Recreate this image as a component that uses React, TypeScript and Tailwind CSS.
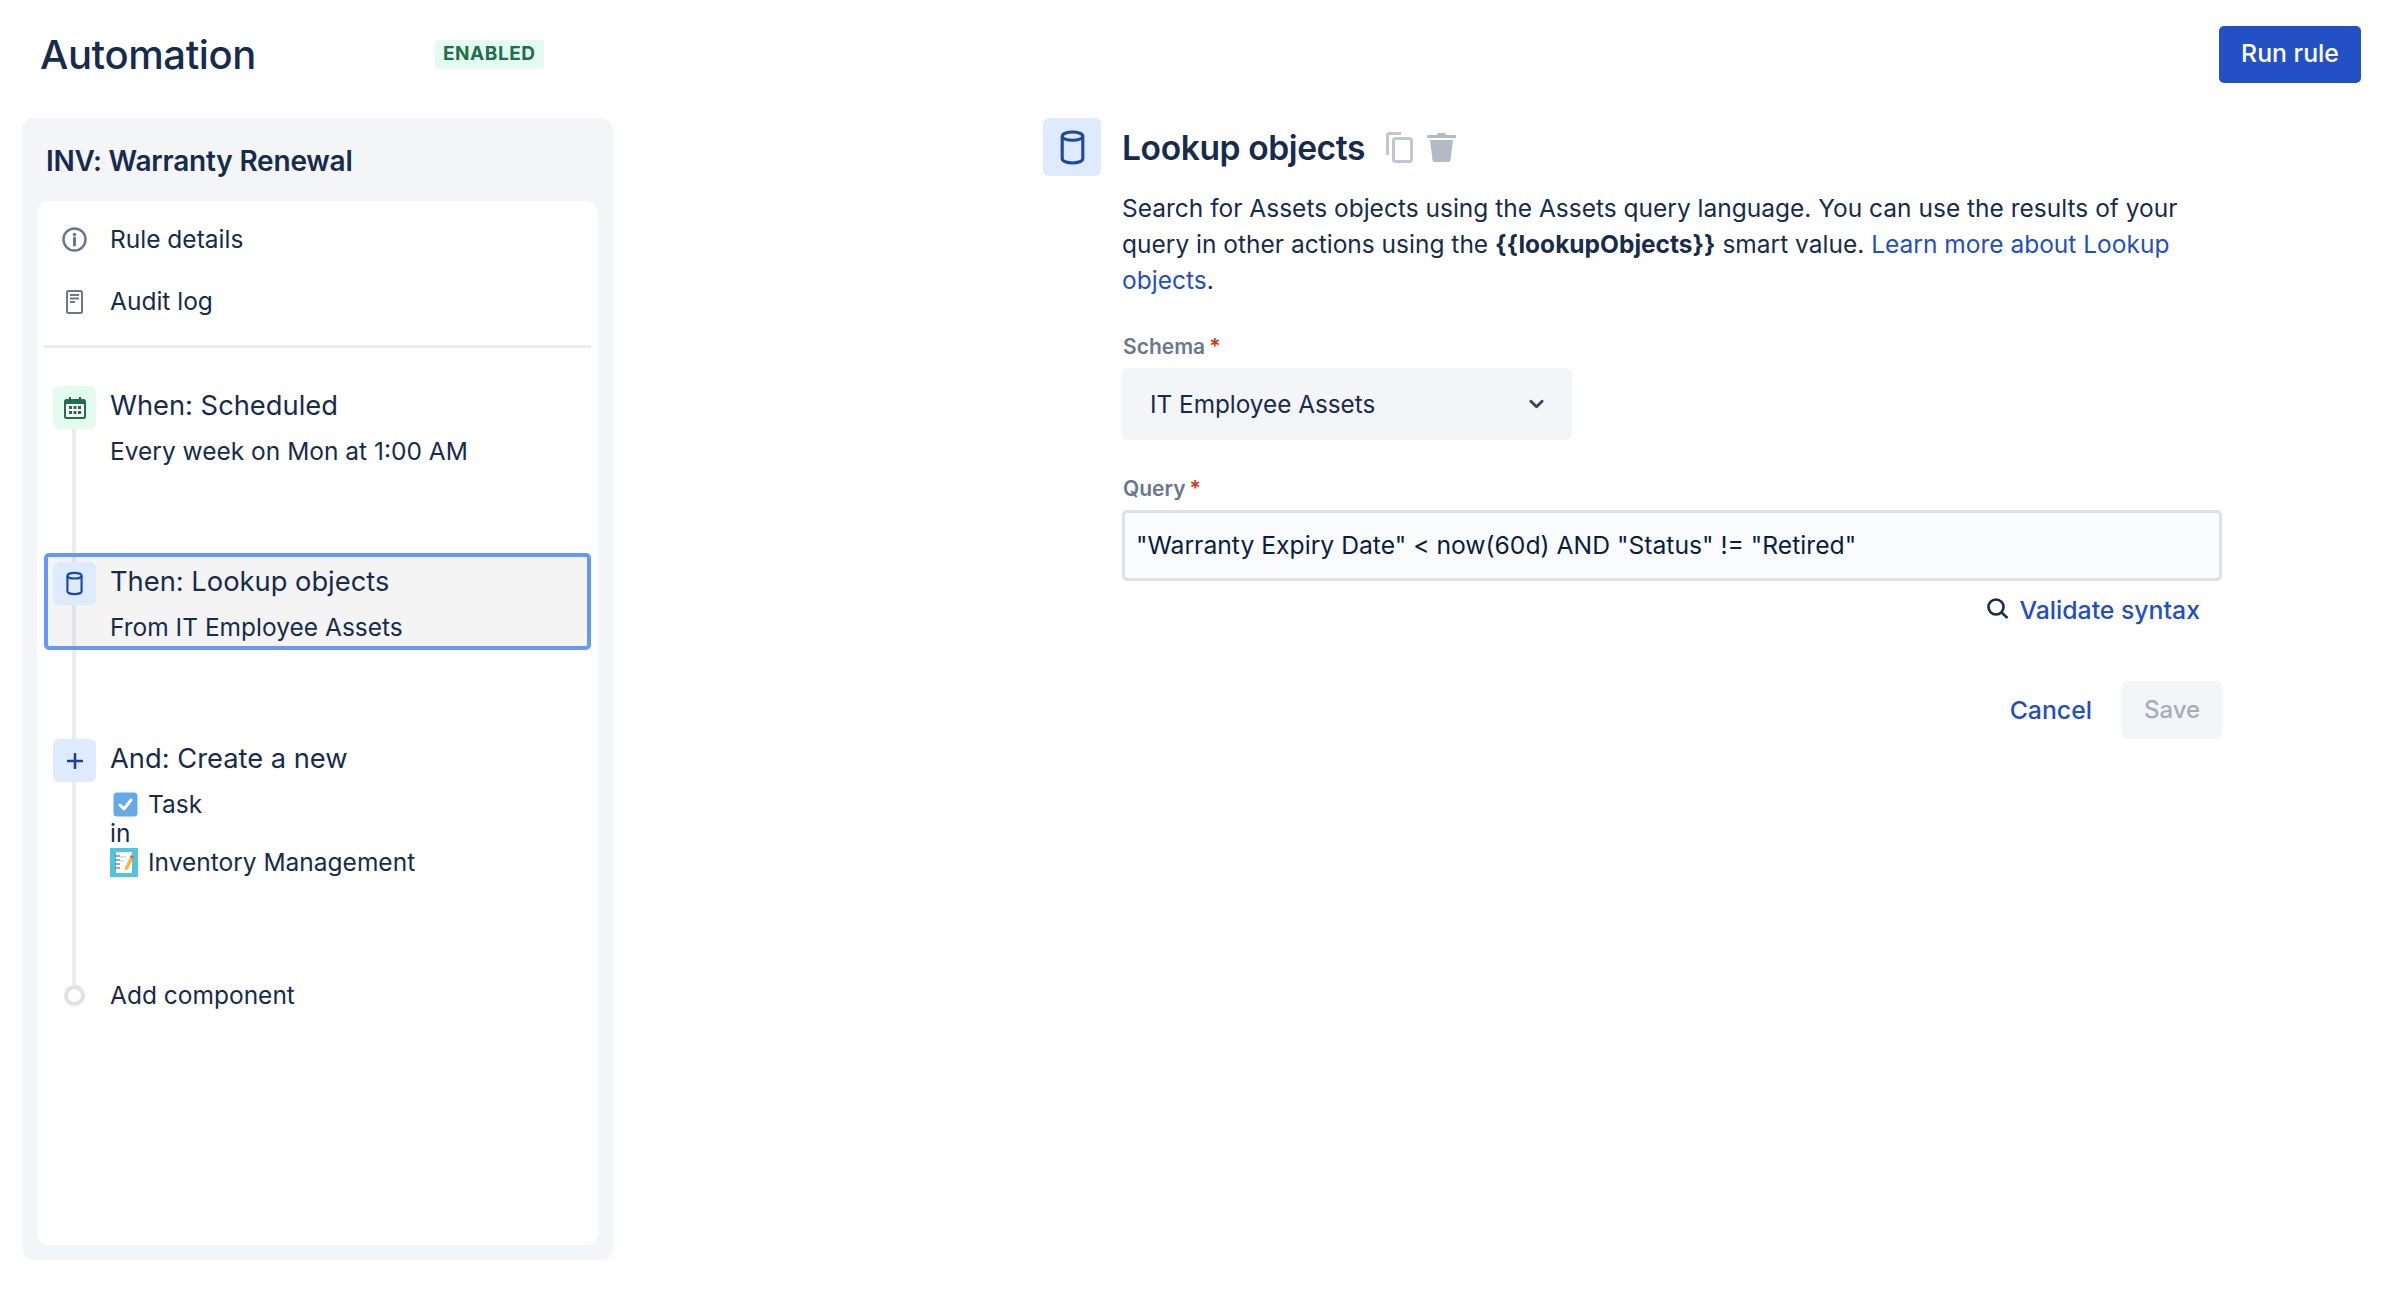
import React from "react";

function Cylinder({ className }: { className: string }) {
  return (
    <svg viewBox="0 0 24 34" fill="none" stroke="currentColor" strokeWidth="3" className={className}>
      <ellipse cx="12" cy="6" rx="10" ry="4" />
      <path d="M2 6v22c0 2.2 4.5 4 10 4s10-1.800 10-4V6" />
    </svg>
  );
}

function TaskIcon() {
  return (
    <svg viewBox="0 0 25 25" className="w-[25px] h-[25px]">
      <rect x="0.500" y="0.500" width="24" height="24" rx="3.500" fill="#65aae8" />
      <path d="M7 13l4 4 7-9" fill="none" stroke="#fff" strokeWidth="3" strokeLinecap="round" strokeLinejoin="round" />
    </svg>
  );
}

function ProjectIcon() {
  return (
    <svg viewBox="0 0 28 29" className="w-[28px] h-[29px]">
      <rect width="28" height="29" fill="#54c3e0" />
      <rect x="6" y="4" width="16" height="21" rx="1" fill="#fff" />
      <path d="M5 8h5M5 12h5M5 16h5M5 20h5" stroke="#44546f" strokeWidth="1.200" />
      <path d="M10 9h6M10 13h4" stroke="#b8c4d2" strokeWidth="1.200" />
      <path d="M21 7l3 2-6 12-3 2 .2-4z" fill="#f6b73c" />
      <path d="M21 7l3 2-1 2-3-2z" fill="#e5534b" />
    </svg>
  );
}

function Step({
  icon,
  iconBg,
  title,
  selected,
  children,
}: {
  icon: React.ReactNode;
  iconBg: string;
  title: string;
  selected?: boolean;
  children: React.ReactNode;
}) {
  return (
    <div
      className={
        selected
          ? "relative flex mx-[7px] h-[97px] pl-[5px] pt-[5px] gap-[14px] border-[4px] rounded-[5px] border-[#6698f8] bg-black/[0.045]"
          : "relative flex mx-[7px] pl-[5px] pt-[5px] gap-[14px] border-[4px] border-transparent"
      }
    >
      <div className={`w-[43px] h-[43px] rounded-[6px] flex items-center justify-center shrink-0 ${iconBg}`}>{icon}</div>
      <div className="text-[#172b4d]">
        <div className="pt-[1px] text-[27.3px] leading-[38px]">{title}</div>
        {children}
      </div>
    </div>
  );
}

export default function App() {
  return (
    <div className="h-[1292px] bg-white text-[#172b4d] font-[Inter,sans-serif] overflow-hidden">
      <header className="h-[108px] mb-[10px] flex items-center pl-[40px] pr-[31px]">
        <h1 className="w-[395px] pt-[1px] text-[40px] font-medium tracking-[-0.4px]">Automation</h1>
        <span className="h-[29px] px-[8px] flex items-center rounded-[4px] bg-[#e3fcef] text-[#216e4e] text-[19px] font-bold tracking-[0.55px]">
          ENABLED
        </span>
        <button className="ml-auto w-[142px] h-[57px] rounded-[5px] bg-[#2350c4] text-white text-[24.8px] font-medium">
          Run rule
        </button>
      </header>

      <main className="flex pl-[22px]">
        <aside className="w-[591px] h-[1142px] rounded-[12px] bg-[#f4f5f7] flex flex-col">
          <div className="h-[83px] pt-[3px] pl-[24px] flex items-center text-[28px] font-semibold tracking-[-0.2px]">INV: Warranty Renewal</div>
          <div className="mx-[15px] h-[1044px] rounded-[12px] bg-white pt-[7px]">
            <div className="h-[62px] pt-[1px] flex items-center pl-[25px] gap-[23px] text-[24.5px]">
              <svg viewBox="0 0 25 25" fill="none" className="w-[25px] h-[25px] text-[#6b778c]">
                <circle cx="12.500" cy="12.500" r="11" stroke="currentColor" strokeWidth="2.500" />
                <circle cx="12.500" cy="7.500" r="1.700" fill="currentColor" />
                <path d="M12.500 11v7" stroke="currentColor" strokeWidth="3" strokeLinecap="round" />
              </svg>
              Rule details
            </div>
            <div className="h-[62px] pt-[1px] flex items-center pl-[29px] gap-[27px] text-[24.5px]">
              <svg viewBox="0 0 17 24" fill="none" className="w-[17px] h-[24px] text-[#6b778c]">
                <rect x="1" y="1" width="15" height="22" rx="1.500" stroke="currentColor" strokeWidth="2" />
                <path d="M4 5h9M4 8.500h9M4 12h5" stroke="currentColor" strokeWidth="2" />
              </svg>
              Audit log
            </div>
            <div className="mt-[13px] mx-[7px] h-[3px] bg-[#ebecf0]" />

            <div className="relative pt-[29px]">
              <div className="absolute left-[35px] top-[81px] h-[556px] w-[4px] bg-[#ebecf0]" />
              <Step
                iconBg="bg-[#e3fcef]"
                title="When: Scheduled"
                icon={
                  <svg viewBox="0 0 22 22" className="w-[22px] h-[22px]">
                    <path
                      fill="#216e4e"
                      d="M5 0h2v2h8V0h2v2h2.500A2.500 2.500 0 0 1 22 4.500V19.500a2.500 2.500 0 0 1-2.500 2.500h-17A2.500 2.500 0 0 1 0 19.500V4.500A2.500 2.500 0 0 1 2.500 2H5z"
                    />
                    <path fill="#fff" d="M2 7h18v12.500a.5.5 0 0 1-.5.5h-17a.5.5 0 0 1-.5-.5z" />
                    <path
                      fill="#216e4e"
                      d="M5 9h3v3H5zM9.500 9h3v3h-3zM14 9h3v3h-3zM5 14h3v3H5zM9.500 14h3v3h-3zM14 14h3v3h-3z"
                    />
                  </svg>
                }
              >
                <div className="mt-[8px] pb-[1px] text-[24.5px] leading-[36px]">Every week on Mon at 1:00 AM</div>
              </Step>

              <div className="h-[79px]" />
              <Step selected iconBg="bg-[#deebff]" title="Then: Lookup objects" icon={<Cylinder className="w-[17px] h-[25px] text-[#1d47a5]" />}>
                <div className="mt-[8px] text-[24.5px] leading-[36px]">From IT Employee Assets</div>
              </Step>

              <div className="h-[80px]" />
              <Step
                iconBg="bg-[#deebff]"
                title="And: Create a new"
                icon={
                  <svg viewBox="0 0 16 16" className="w-[16px] h-[16px]">
                    <path d="M8 1v14M1 8h14" stroke="#1d3f9a" strokeWidth="2.600" strokeLinecap="round" />
                  </svg>
                }
              >
                <div className="mt-[12px] text-[24.5px] leading-[29px]">
                  <div className="flex items-center pl-[3px] gap-[10px] h-[29px]">
                    <TaskIcon />
                    Task
                  </div>
                  <div className="h-[29px]">in</div>
                  <div className="flex items-center gap-[10px] h-[29px] mb-[1px]">
                    <ProjectIcon />
                    Inventory Management
                  </div>
                </div>
              </Step>

              <div className="relative mt-[95px] h-[36px] flex items-center pl-[27px] gap-[25px] text-[24.5px]">
                <span className="w-[21px] h-[21px] rounded-full border-[4px] border-[#dfe1e6] bg-white" />
                Add component
              </div>
            </div>
          </div>
        </aside>

        <section className="ml-[430px] w-[1179px]">
          <div className="flex items-center h-[58px]">
            <div className="w-[58px] h-[58px] rounded-[6px] bg-[#deebff] flex items-center justify-center">
              <Cylinder className="w-[25px] h-[35px] text-[#1d47a5]" />
            </div>
            <h2 className="ml-[21px] pt-[3px] text-[33.6px] font-semibold tracking-[-0.4px]">Lookup objects</h2>
            <svg viewBox="0 0 27 31" fill="none" className="ml-[21px] w-[27px] h-[31px] text-[#c1c7d0]">
              <path d="M15 1.500H3A1.500 1.500 0 0 0 1.500 3v20" stroke="currentColor" strokeWidth="3" />
              <rect x="7.500" y="6.500" width="18" height="23" rx="2" stroke="currentColor" strokeWidth="3" />
            </svg>
            <svg viewBox="0 0 29 29" className="ml-[14px] w-[29px] h-[29px]">
              <path fill="#b3bac5" d="M11 0h7l1 2h9a1 1 0 0 1 1 1v2H0V3a1 1 0 0 1 1-1h9zM3 7h23l-2.500 20a2 2 0 0 1-2 2h-14a2 2 0 0 1-2-2z" />
            </svg>
          </div>

          <div className="pl-[79px]">
            <p className="mt-[14px] text-[24.5px] leading-[36px]">
              <span className="block">Search for Assets objects using the Assets query language. You can use the results of your</span>
              <span className="block">
                query in other actions using the <b className="font-bold">{"{{lookupObjects}}"}</b> smart value.{" "}
                <a className="text-[#1f4fc2]">Learn more about Lookup</a>
              </span>
              <span className="block">
                <a className="text-[#1f4fc2]">objects</a>.
              </span>
            </p>

            <div className="mt-[34px] pl-[1px] h-[30px] flex items-center text-[21px] font-semibold text-[#6b778c]">
              Schema<span className="ml-[4px] text-[#de350b]">*</span>
            </div>
            <div className="mt-[6px] w-[450px] h-[72px] rounded-[6px] bg-[#f4f5f7] flex items-center pl-[28px] pr-[28px] justify-between text-[24.3px]">
              IT Employee Assets
              <svg viewBox="0 0 16 10" fill="none" className="w-[15px] h-[10px]">
                <path d="M2 2l6 6 6-6" stroke="#344563" strokeWidth="3" strokeLinecap="round" strokeLinejoin="round" />
              </svg>
            </div>

            <div className="mt-[34px] pl-[1px] h-[30px] flex items-center text-[21px] font-semibold text-[#6b778c]">
              Query<span className="ml-[4px] text-[#de350b]">*</span>
            </div>
            <div className="mt-[6px] w-[1100px] h-[71px] rounded-[5px] border-[3px] border-[#dfe1e6] bg-[#fafbfc] flex items-center pl-[11px] text-[24.7px] text-[#091e42]">
              "Warranty Expiry Date" &lt; now(60d) AND "Status" != "Retired"
            </div>

            <div className="mt-[12px] w-[1100px] h-[36px] pr-[22px] flex items-center justify-end gap-[10px]">
              <svg viewBox="0 0 22 21" fill="none" className="w-[22px] h-[21px] mb-[6px]">
                <circle cx="9" cy="9" r="7.500" stroke="#172b4d" strokeWidth="2.600" />
                <path d="M14.500 14.500l6 5.500" stroke="#172b4d" strokeWidth="2.600" />
              </svg>
              <a className="text-[#1f4fc2] text-[24.8px] font-medium">Validate syntax</a>
            </div>

            <div className="mt-[52px] w-[1100px] flex items-center justify-end gap-[30px]">
              <a className="pt-[1px] text-[#1f4fc2] text-[24.8px] font-medium">Cancel</a>
              <button className="w-[100px] h-[58px] rounded-[6px] bg-[#f4f5f7] text-[#a5adba] text-[24px] font-medium">Save</button>
            </div>
          </div>
        </section>
      </main>
    </div>
  );
}
